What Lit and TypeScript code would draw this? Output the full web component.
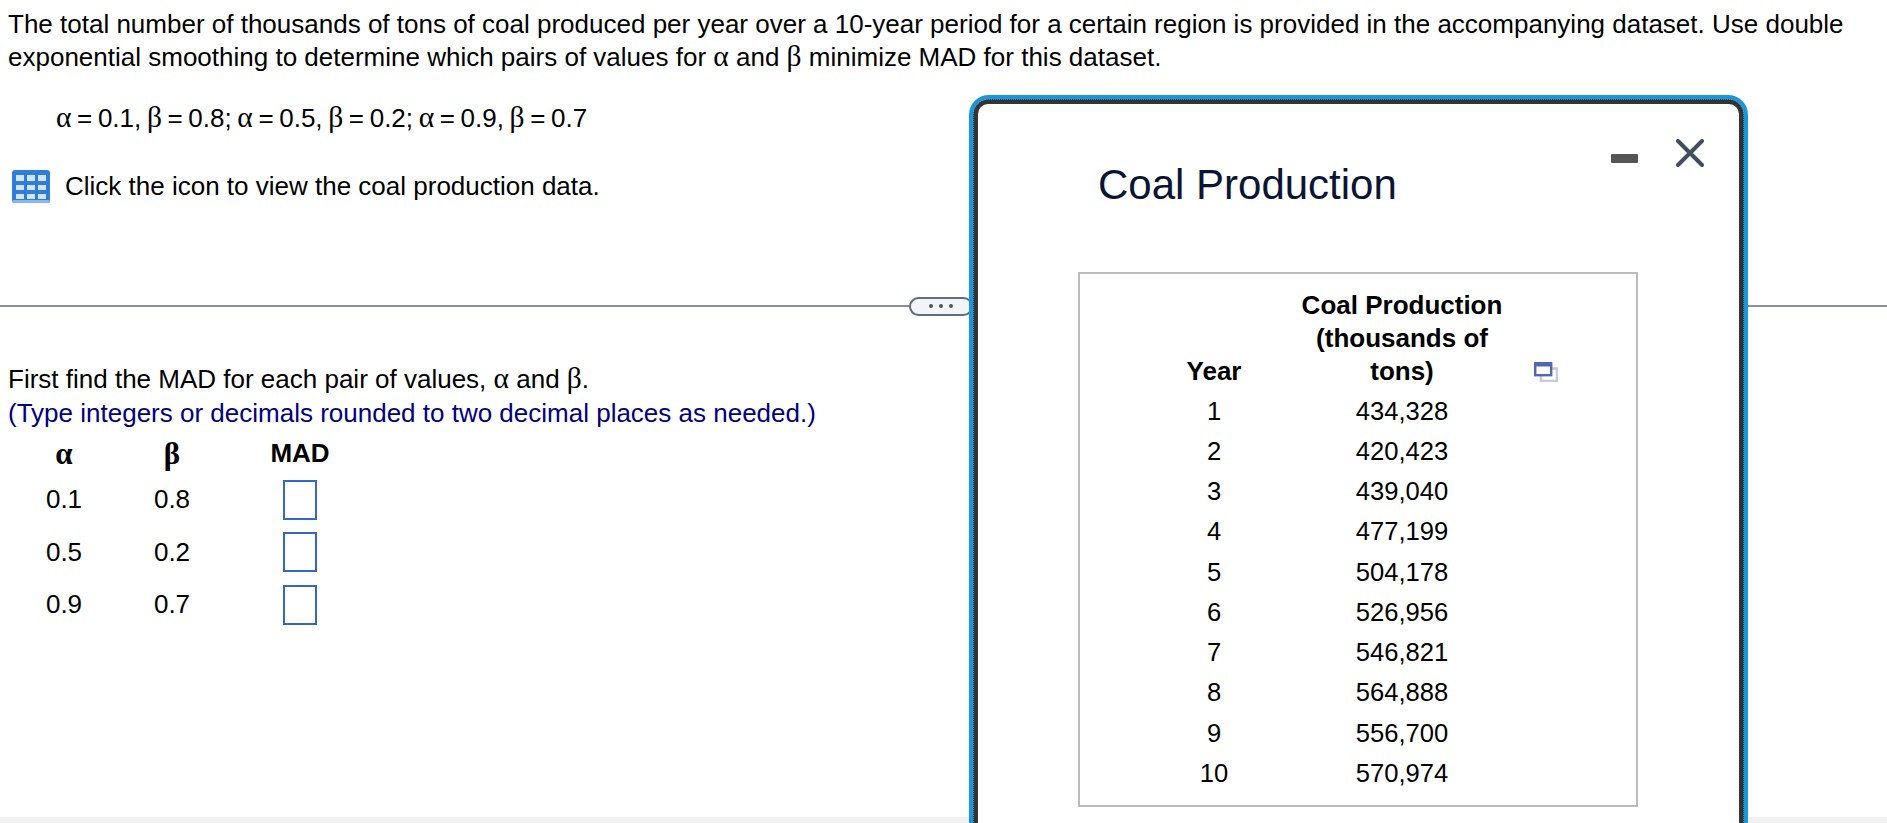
import { LitElement, html, svg, css } from "lit";
import { customElement } from "lit/decorators.js";

const G = (c: string) => html`<span class="gr">${c}</span>`;

@customElement("app-root")
export class AppRoot extends LitElement {
  static styles = css`
    :host { display: block; width: 1887px; height: 823px; position: relative; overflow: hidden; background: #fff; color: #000; font-family: "Liberation Sans", Arial, sans-serif; font-size: 26px; line-height: 33px; }
    .page { display: flex; flex-direction: column; height: 823px; }
    .main { flex: 1; padding-top: 8px; min-height: 0; }
    .foot { height: 6px; background: #f1f1f1; }
    .gr { font-family: "Liberation Serif", serif; font-size: 29.5px; line-height: 1; }
    .q { margin: 0; padding: 0 8px; width: 1860px; }
    .eq { margin: 28px 0 0; padding-left: 56px; word-spacing: -1.6px; }
    .click { display: flex; align-items: center; gap: 15px; margin: 35px 0 0; padding-left: 12px; }
    .click svg { display: block; filter: blur(0.4px); }
    .sep { display: flex; align-items: center; height: 20px; margin-top: 93px; }
    .line { height: 2px; background: #8a90a3; width: 909px; }
    .line.rest { flex: 1; width: auto; }
    .pill { width: 64px; height: 19px; box-sizing: border-box; border: 2px solid #5f6e7e; border-radius: 10px; background: #f2f4f7; display: flex; align-items: center; gap: 6px; padding-left: 18px; }
    .pill i { width: 4px; height: 4px; border-radius: 50%; background: #555; }
    .first { margin: 47px 0 0; padding-left: 8px; }
    .type { margin: 1px 0 0; padding-left: 8px; color: #000080; }
    .pairs { display: grid; grid-template-columns: 108px 108px 148px; grid-template-rows: 37px; grid-auto-rows: 52.5px; margin: 6.5px 0 0 10px; justify-items: center; align-items: center; }
    .pairs .h { font-weight: 700; height: 33px; line-height: 33px; align-self: start; }
    .pairs .h.gr { font-size: 31px; }
    .in { width: 34px; height: 40px; box-sizing: border-box; border: 2px solid #3366cc; background: #fff; }
    .modal { position: absolute; left: 969px; top: 95px; width: 779px; height: 800px; box-sizing: border-box; border: 4px solid #1b95d9; border-radius: 20px; }
    .dot { height: 100%; box-sizing: border-box; border: 1px dotted #1b95d9; background: #333; border-radius: 16px; }
    .body { height: 100%; box-sizing: border-box; background: #fff; border: 4px solid #333; border-radius: 14px; padding: 57px 0 0 120px; position: relative; }
    h2 { margin: 0; font-size: 42px; line-height: 48px; font-weight: 400; color: #0a1533; }
    .ctrl { position: absolute; right: 35px; top: 35px; display: flex; align-items: flex-start; gap: 38px; }
    .min { width: 27px; height: 9px; background: #555; margin-top: 15px; border-radius: 1px; }
    .box { margin: 63px 0 0 -20px; width: 560px; height: 535px; box-sizing: border-box; border: 2px solid #bbb; padding-top: 12px; }
    .tbl { display: grid; grid-template-columns: 128px 248px auto; grid-template-rows: 105px; grid-auto-rows: 40.25px; margin-left: 70px; justify-items: center; align-items: center; font-size: 25.6px; }
    .tbl .hd { font-weight: 700; font-size: 26px; text-align: center; align-self: end; margin-bottom: 3px; }
    .copy { justify-self: start; align-self: end; margin: 0 0 9px 8px; display: block; filter: blur(0.3px); }
  `;

  render() {
    const pairs = [["0.1", "0.8"], ["0.5", "0.2"], ["0.9", "0.7"]];
    const rows = [["1", "434,328"], ["2", "420,423"], ["3", "439,040"], ["4", "477,199"], ["5", "504,178"], ["6", "526,956"], ["7", "546,821"], ["8", "564,888"], ["9", "556,700"], ["10", "570,974"]];
    return html`
      <div class="page">
        <div class="main">
          <p class="q">The total number of thousands of tons of coal produced per year over a 10-year period for a certain region is provided in the accompanying dataset. Use double exponential smoothing to determine which pairs of values for ${G("α")} and ${G("β")} minimize MAD for this dataset.</p>
          <p class="eq">${G("α")} = 0.1, ${G("β")} = 0.8; ${G("α")} = 0.5, ${G("β")} = 0.2; ${G("α")} = 0.9, ${G("β")} = 0.7</p>
          <div class="click">
            <svg width="38" height="33" viewBox="0 0 38 33" aria-hidden="true">
              <rect x="0" y="0" width="38" height="33" rx="3" fill="#2e7ddb"/>
              <rect x="0" y="30" width="38" height="3" rx="1.5" fill="#8ab6ec"/>
              ${[5, 15, 24].map((y, i) => [4, 15, 26].map((x) => svg`<rect x=${x} y=${y} width="8" height=${i === 0 ? 6 : 5} fill="#d3e4fa"/>`))}
            </svg>
            <span>Click the icon to view the coal production data.</span>
          </div>
          <div class="sep"><div class="line"></div><div class="pill"><i></i><i></i><i></i></div><div class="line rest"></div></div>
          <p class="first">First find the MAD for each pair of values, ${G("α")} and ${G("β")}.</p>
          <p class="type">(Type integers or decimals rounded to two decimal places as needed.)</p>
          <div class="pairs">
            <b class="h gr">α</b><b class="h gr">β</b><b class="h">MAD</b>
            ${pairs.map(([a, b]) => html`<span>${a}</span><span>${b}</span><div class="in"></div>`)}
          </div>
        </div>
        <div class="foot"></div>
      </div>
      <div class="modal"><div class="dot"><div class="body">
        <div class="ctrl">
          <div class="min"></div>
          <svg width="28" height="28" viewBox="0 0 28 28" aria-hidden="true"><path d="M2 2 L26 26 M26 2 L2 26" stroke="#3f4f60" stroke-width="4" stroke-linecap="round" fill="none"/></svg>
        </div>
        <h2>Coal Production</h2>
        <div class="box">
          <div class="tbl">
            <div class="hd">Year</div>
            <div class="hd">Coal Production<br>(thousands of<br>tons)</div>
            <svg class="copy" width="24" height="20" viewBox="0 0 24 20" aria-hidden="true">
              <rect x="7" y="6.5" width="16" height="12.5" fill="#fff" stroke="#c5cbe4" stroke-width="2.5"/>
              <rect x="1.2" y="1.2" width="16" height="12" fill="#fff" stroke="#5566b0" stroke-width="2.4"/>
              <rect x="1" y="1" width="16" height="3.5" fill="#5566b0"/>
            </svg>
            ${rows.map(([y, v]) => html`<span>${y}</span><span>${v}</span><span></span>`)}
          </div>
        </div>
      </div></div></div>
    `;
  }
}
